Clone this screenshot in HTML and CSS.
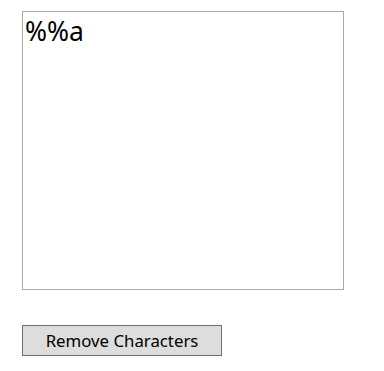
FILE: index.html
```html
<!DOCTYPE html>
<html lang="en">
<head>
  <meta charset="UTF-8" />
  <title>Remove Characters</title>
  <link rel="stylesheet" href="styles.css">
</head>
<body>
  <div class="contenedor">
    <textarea id="entrada" class="entrada">%%a</textarea>
    <button class="btn">Remove Characters</button>
  </div>
</body>
</html>
```

FILE: styles.css
```css
body {
  margin: 0;
  background-color: #ffffff;
  font-family: 'Noto Sans', 'Open Sans', sans-serif;
}

.contenedor {
  display: flex;
  flex-direction: column;
  align-items: flex-start;
  padding: 11px 22px;
}

.entrada {
  box-sizing: border-box;
  width: 322px;
  height: 279px;
  border: 1px solid #a9a9a9;
  padding: 2px 2px;
  margin: 0;
  font-family: 'Noto Sans', 'Open Sans', sans-serif;
  font-size: 26.5px;
  line-height: 34px;
  color: #000000;
  resize: none;
  outline: none;
}

.btn {
  box-sizing: border-box;
  width: 200px;
  height: 31px;
  margin-top: 35px;
  background-color: #dddddd;
  border: 1px solid #707070;
  border-radius: 0;
  font-family: 'Noto Sans', 'Open Sans', sans-serif;
  font-size: 16.8px;
  color: #000000;
  padding: 0;
}
```
